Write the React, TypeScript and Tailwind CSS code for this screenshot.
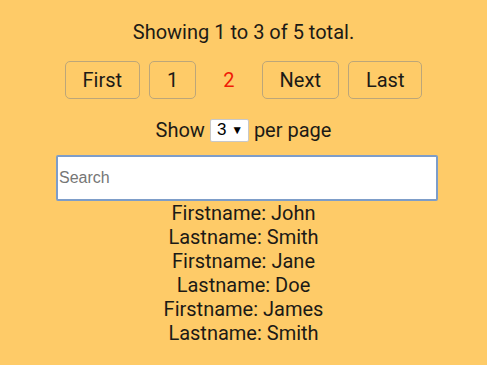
import React from "react";

const people = [
  { first: "John", last: "Smith" },
  { first: "Jane", last: "Doe" },
  { first: "James", last: "Smith" },
];

const btn =
  "h-[38px] px-[17px] flex items-center justify-center rounded-[5px] border border-[#bca679] text-[20px]";

export default function App() {
  return (
    <div className="w-[487px] h-[365px] bg-[#fecb68] text-[#1c1a16] font-['Roboto',sans-serif] flex flex-col items-center">
      <p className="mt-[20px] text-[20px] leading-[24px]">Showing 1 to 3 of 5 total.</p>

      <div className="mt-[17px] flex gap-[9px]">
        <button className={btn}>First</button>
        <button className={btn}>1</button>
        <span className={btn + " border-transparent text-[#f01c06]"}>2</span>
        <button className={btn}>Next</button>
        <button className={btn}>Last</button>
      </div>

      <div className="mt-[19px] flex items-center text-[20px] leading-[24px]">
        <span>Show</span>
        <span className="mx-[5px] w-[39px] h-[23px] bg-white border border-[#c8c8c8] rounded-[2px] flex items-center pl-[6px] gap-[5px] text-[17px] font-['Liberation_Sans',sans-serif] text-black">
          3<span className="text-[12px]">▼</span>
        </span>
        <span>per page</span>
      </div>

      <input
        placeholder="Search"
        className="mt-[13px] self-start ml-[56px] w-[382px] h-[46px] bg-white border-2 border-[#7d9dc9] rounded-[2px] px-[1px] text-[16px] font-['Liberation_Sans',sans-serif] placeholder:text-[#767676] outline-none"
      />

      <div className="flex flex-col items-center text-[20px] leading-[24px]">
        {people.map((p) => (
          <React.Fragment key={p.first}>
            <div>Firstname: {p.first}</div>
            <div>Lastname: {p.last}</div>
          </React.Fragment>
        ))}
      </div>
    </div>
  );
}
